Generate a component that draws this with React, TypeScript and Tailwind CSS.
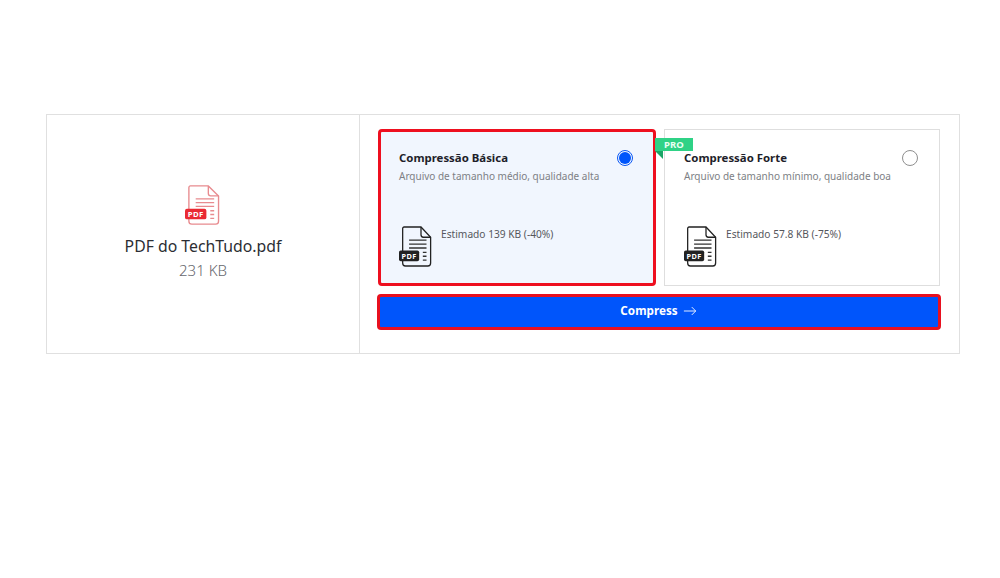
const FONT = "font-['Noto_Sans','Open_Sans',sans-serif]";

function PdfIcon({ color, badge, line, className }: { color: string; badge: string; line: string; className: string }) {
  return (
    <svg viewBox="0 0 36 42" preserveAspectRatio="none" className={className} fill="none">
      <path d="M5.5 1H24L34.5 11.5V38a3 3 0 0 1-3 3H7a3 3 0 0 1-3-3V2.5A1.5 1.5 0 0 1 5.5 1Z" stroke={color} strokeWidth="1.4" fill="none" />
      <path d="M24 1V9a2.5 2.5 0 0 0 2.5 2.5H34.5" stroke={color} strokeWidth="1.4" />
      <path d="M11 14.5H30M11 18.5H30M11 22.5H30M26 27H30M26 31H30M26 35H30" stroke={line} strokeWidth="1.4" />
      <rect x="0" y="25" width="22" height="11" rx="2" fill={badge} />
      <text x="11" y="33.6" textAnchor="middle" fontSize="8" fontWeight="700" fill="#fff" fontFamily="Noto Sans, sans-serif" letterSpacing="0.4">PDF</text>
    </svg>
  );
}

function Option({
  title,
  desc,
  est,
  selected,
}: {
  title: string;
  desc: string;
  est: string;
  selected?: boolean;
}) {
  return (
    <div
      className={
        selected
          ? "relative h-[157px] w-[278px] rounded-[4px] border-[3px] border-[#ee0f1f] bg-[#f1f6fe] pl-[18px] pr-[20px] pt-[17px]"
          : "relative h-[157px] w-[276px] border border-[#dedede] bg-white pl-[19px] pr-[21px] pt-[19px]"
      }
    >
      <div className="flex items-start justify-between">
        <div>
          <div className="text-[11.4px] font-bold leading-[18px] text-[#1e1e2a]">{title}</div>
          <div className="mt-[1px] whitespace-nowrap text-[10px] leading-[16px] text-[#7d7f85]">{desc}</div>
        </div>
        {selected ? (
          <div className="mt-[1px] flex h-4 w-4 shrink-0 items-center justify-center rounded-full border border-[#0a57f5]">
            <div className="h-3 w-3 rounded-full bg-[#0055fb]" />
          </div>
        ) : (
          <div className="mt-[1px] h-4 w-4 shrink-0 rounded-full border border-[#8f8f8f]" />
        )}
      </div>
      <div className="mt-[42px] flex items-start">
        <PdfIcon color="#222222" badge="#222222" line="#333333" className="h-[41px] w-[33px] shrink-0" />
        <div className="ml-[9px] mt-[1px] whitespace-nowrap text-[10.2px] leading-[15px] text-[#55565c]">{est}</div>
      </div>
    </div>
  );
}

export default function App() {
  return (
    <div className={`${FONT} h-[578px] w-[1000px] bg-white pl-[46px] pt-[114px]`}>
      <div className="flex h-[240px] w-[914px] border border-[#e0e0e0]">
        <div className="flex w-[313px] shrink-0 flex-col items-center border-r border-[#e0e0e0] pt-[70px]">
          <PdfIcon color="#e88b8f" badge="#ea2a33" line="#e88b8f" className="mr-[2px] h-[40px] w-[35px]" />
          <div className="mt-[9px] whitespace-nowrap text-[15.8px] leading-[24px] text-[#2b2d33]">PDF do TechTudo.pdf</div>
          <div className="mt-[1px] text-[15px] font-light leading-[22px] text-[#66676d]">231 KB</div>
        </div>
        <div className="flex min-w-0 flex-1 flex-col pl-[17px] pt-[14px]">
          <div className="relative flex items-start gap-[8px] pl-[1px]">
            <Option
              selected
              title="Compressão Básica"
              desc="Arquivo de tamanho médio, qualidade alta"
              est="Estimado 139 KB (-40%)"
            />
            <Option
              title="Compressão Forte"
              desc="Arquivo de tamanho mínimo, qualidade boa"
              est="Estimado 57.8 KB (-75%)"
            />
            <div className="absolute left-[278px] top-[9px] flex h-[13px] w-[38px] items-center bg-[#2fd286] pl-[9px] text-[9.5px] font-bold leading-none text-[#e9fff3]">
              PRO
            </div>
            <div className="absolute left-[278px] top-[22px] h-0 w-0 border-l-[8px] border-t-[8px] border-l-transparent border-t-[#1ba566]" />
          </div>
          <button className="mt-[8px] flex h-[36px] w-[564px] items-center justify-center gap-[5px] rounded-[4px] border-[3px] border-[#e8101f] bg-[#0055fb] pb-[2px] pr-[1px] text-[11.7px] font-bold text-white">
            Compress
            <svg viewBox="0 0 16 12" className="h-[12px] w-[14px]" fill="none" stroke="#fff" strokeWidth="1">
              <path d="M1 6H14.5M10 1.5L14.5 6L10 10.5" />
            </svg>
          </button>
        </div>
      </div>
    </div>
  );
}
